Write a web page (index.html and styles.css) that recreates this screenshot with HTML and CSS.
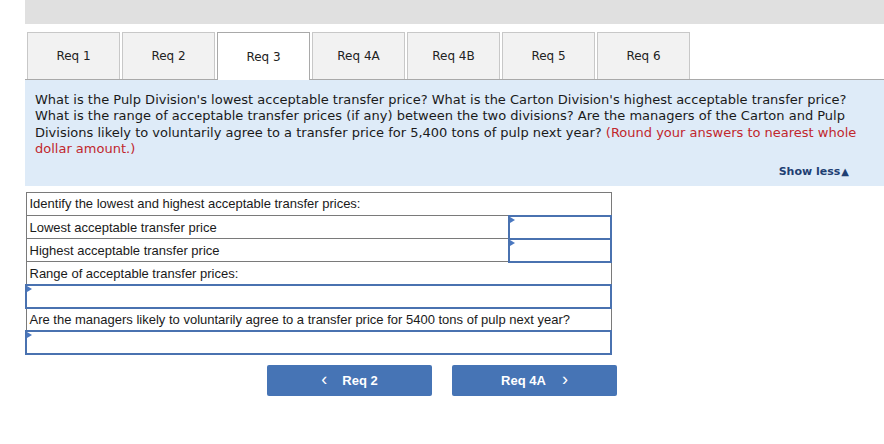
FILE: index.html
```html
<!DOCTYPE html>
<html>
<head>
<meta charset="utf-8">
<link rel="stylesheet" href="styles.css">
</head>
<body>
<div class="page">
  <div class="topbar"></div>
  <div class="tabs">
    <div class="tab">Req 1</div>
    <div class="tab">Req 2</div>
    <div class="tab active">Req 3</div>
    <div class="tab">Req 4A</div>
    <div class="tab">Req 4B</div>
    <div class="tab">Req 5</div>
    <div class="tab">Req 6</div>
  </div>
  <div class="panel">
    <p class="question">What is the Pulp Division's lowest acceptable transfer price? What is the Carton Division's highest acceptable transfer price? What is the range of acceptable transfer prices (if any) between the two divisions? Are the managers of the Carton and Pulp Divisions likely to voluntarily agree to a transfer price for 5,400 tons of pulp next year? <span class="note">(Round your answers to nearest whole dollar amount.)</span></p>
    <div class="showless">Show less<span class="tri">▲</span></div>
  </div>
  <table class="grid">
    <tr><td colspan="2">Identify the lowest and highest acceptable transfer prices:</td></tr>
    <tr><td>Lowest acceptable transfer price</td><td class="inp small"></td></tr>
    <tr><td>Highest acceptable transfer price</td><td class="inp small"></td></tr>
    <tr><td colspan="2">Range of acceptable transfer prices:</td></tr>
    <tr><td colspan="2" class="inp"></td></tr>
    <tr><td colspan="2">Are the managers likely to voluntarily agree to a transfer price for 5400 tons of pulp next year?</td></tr>
    <tr><td colspan="2" class="inp"></td></tr>
  </table>
  <div class="nav">
    <div class="btn"><span class="chev">&lsaquo;</span>Req 2</div>
    <div class="btn">Req 4A<span class="chev right">&rsaquo;</span></div>
  </div>
</div>
</body>
</html>
```

FILE: styles.css
```css
html, body {
  margin: 0;
  padding: 0;
  background: #ffffff;
}

.page {
  padding-left: 25px;
  width: 859px;
}

.topbar {
  height: 24px;
  background: #e0e0e0;
}

.tabs {
  display: flex;
  gap: 2px;
  margin-top: 8px;
  padding-left: 2px;
  border-bottom: 1px solid #a9a9a9;
  height: 47px;
}

.tab {
  width: 91px;
  height: 46px;
  border: 1px solid #c8c8c8;
  border-bottom: none;
  background: #f2f2f2;
  font-family: "DejaVu Sans", Verdana, sans-serif;
  font-size: 12px;
  color: #222;
  display: flex;
  align-items: center;
  justify-content: center;
}

.tab.active {
  background: #ffffff;
  border-color: #a9a9a9;
  height: 47px;
  position: relative;
  z-index: 1;
}

.panel {
  background: #deebf8;
  padding: 12px 8px 6px 10px;
}

.question {
  margin: 0;
  font-family: "DejaVu Sans", Verdana, sans-serif;
  font-size: 13px;
  line-height: 16.3px;
  color: #1a1a1a;
}

.note {
  color: #c1272d;
}

.showless {
  text-align: right;
  margin-top: 7px;
  padding-right: 27px;
  font-family: "DejaVu Sans", Verdana, sans-serif;
  font-size: 11px;
  font-weight: bold;
  line-height: 16px;
  color: #1f3f73;
}

.tri {
  font-size: 10px;
  margin-left: 1px;
}

.grid {
  margin-top: 6px;
  width: 587px;
  border-collapse: collapse;
  font-family: "Liberation Sans", Arial, sans-serif;
  font-size: 13px;
  color: #1a1a1a;
}

.grid td {
  border: 1px solid #7a7a7a;
  height: 23px;
  padding: 0 0 0 3px;
  box-sizing: border-box;
}

.grid td.inp {
  border: 2px solid #4a72b0;
  position: relative;
  padding: 0;
}

.grid td.small {
  width: 102px;
}

.grid td.inp::before {
  content: "";
  position: absolute;
  left: 0;
  top: 0;
  border-left: 5px solid #4a78c0;
  border-top: 3px solid transparent;
  border-bottom: 3px solid transparent;
}

.nav {
  display: flex;
  gap: 20px;
  margin-top: 10px;
  margin-left: 242px;
}

.btn {
  width: 165px;
  height: 31px;
  background: #4674b5;
  border-radius: 2px;
  color: #ffffff;
  font-family: "Liberation Sans", Arial, sans-serif;
  font-size: 13px;
  font-weight: bold;
  display: flex;
  align-items: center;
  justify-content: center;
}

.chev {
  font-size: 18px;
  font-weight: normal;
  margin-right: 15px;
  line-height: 1;
  position: relative;
  top: -1px;
}

.chev.right {
  margin-right: 0;
  margin-left: 16px;
}
```
